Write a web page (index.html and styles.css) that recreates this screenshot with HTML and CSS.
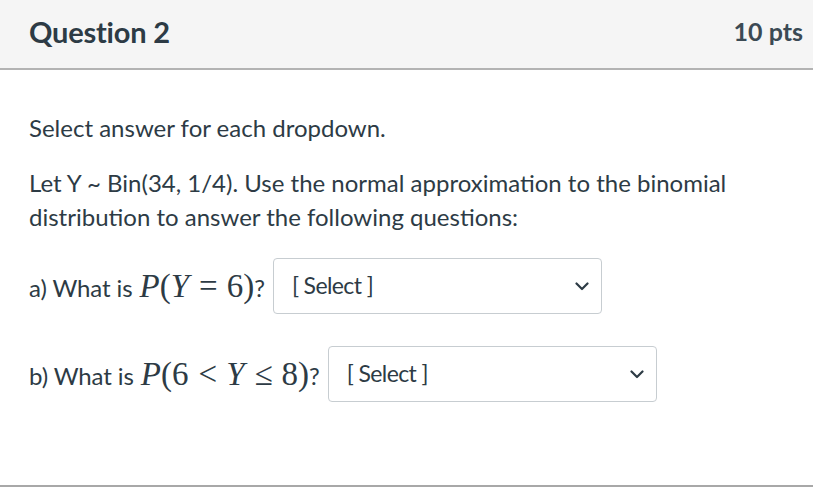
FILE: index.html
```html
<!DOCTYPE html>
<html>
<head>
<meta charset="utf-8">
<link rel="stylesheet" href="styles.css">
</head>
<body>
<div class="question">
  <div class="q-header">
    <h2 class="q-title">Question 2</h2>
    <div class="q-points">10 pts</div>
  </div>
  <div class="q-body">
    <p class="p-first">Select answer for each dropdown.</p>
    <p class="p-second">Let Y ~ Bin(34, 1/4). Use the normal approximation to the binomial distribution to answer the following questions:</p>
    <div class="q-row row-a">
      <span class="label">a) What is <span class="math"><i>P</i>(<i>Y</i><span class="op">=</span>6)</span>?</span>
      <div class="dropdown">
        <span class="dd-text">[ Select ]</span>
        <svg class="chev" width="14" height="9" viewBox="0 0 14 9"><path d="M1.5 1.5 L7 7 L12.5 1.5" fill="none" stroke="#2d3b45" stroke-width="2.2" stroke-linecap="round" stroke-linejoin="round"/></svg>
      </div>
    </div>
    <div class="q-row row-b">
      <span class="label">b) What is <span class="math"><i>P</i>(6<span class="op">&lt;</span><i>Y</i><span class="op">≤</span>8)</span>?</span>
      <div class="dropdown">
        <span class="dd-text">[ Select ]</span>
        <svg class="chev" width="14" height="9" viewBox="0 0 14 9"><path d="M1.5 1.5 L7 7 L12.5 1.5" fill="none" stroke="#2d3b45" stroke-width="2.2" stroke-linecap="round" stroke-linejoin="round"/></svg>
      </div>
    </div>
  </div>
</div>
</body>
</html>
```
FILE: styles.css
```css
html, body {
  margin: 0;
  padding: 0;
  background: #fff;
}
body {
  font-family: Lato, "Noto Sans", sans-serif;
  color: #2d3b45;
  width: 813px;
  height: 492px;
  overflow: hidden;
}
.question {
  border-bottom: 2px solid #a8a8a8;
  height: 487px;
  box-sizing: border-box;
}
.q-header {
  background: #f5f5f5;
  border-bottom: 2px solid #b3b3b3;
  display: flex;
  align-items: center;
  justify-content: space-between;
  padding: 0 10px 6px 29px;
  box-sizing: border-box;
  height: 70px;
}
.q-title {
  margin: 0;
  font-size: 29px;
  font-weight: 700;
  color: #2d3b45;
  letter-spacing: -0.2px;
}
.q-points {
  font-size: 25px;
  font-weight: 700;
  color: #3b4a54;
  letter-spacing: 0;
}
.q-body {
  padding: 0 29px;
}
.q-body p {
  margin: 0;
  font-size: 24px;
  line-height: 34px;
}
.p-first {
  padding-top: 41px;
}
.p-second {
  padding-top: 21px;
  width: 740px;
}
.q-row {
  display: flex;
  align-items: center;
}
.row-a {
  margin-top: 24px;
}
.row-b {
  margin-top: 32px;
}
.label {
  font-size: 24px;
  letter-spacing: -0.1px;
  white-space: nowrap;
}
.math {
  font-family: "Liberation Serif", "DejaVu Serif", serif;
  font-size: 33px;
  letter-spacing: 0;
  margin-left: 1px;
}
.math i {
  font-style: italic;
}
.op {
  margin: 0 9px 0 10px;
}
.dropdown {
  margin-left: 8px;
  width: 329px;
  height: 56px;
  box-sizing: border-box;
  border: 1px solid #c7cdd1;
  border-radius: 4px;
  display: flex;
  align-items: center;
  justify-content: space-between;
  padding: 0 12px 3px 18px;
}
.dd-text {
  font-size: 23px;
  letter-spacing: -0.6px;
  color: #2d3b45;
}
.chev {
  display: block;
  margin-top: 3px;
}
```
